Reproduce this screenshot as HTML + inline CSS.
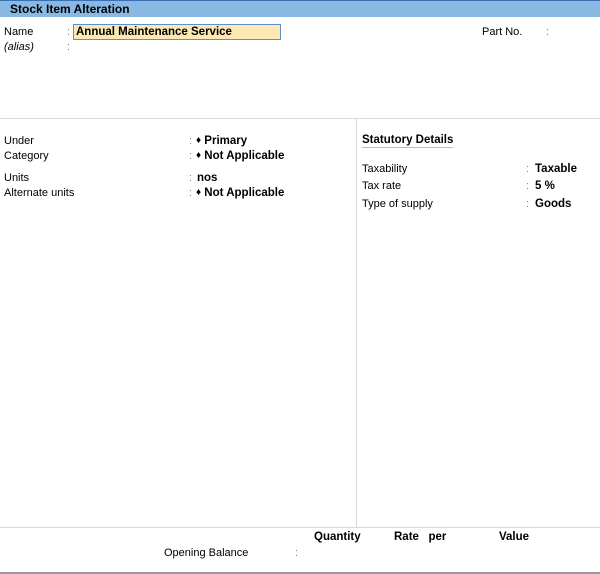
<!DOCTYPE html>
<html><head><style>
body{margin:0;width:600px;height:574px;position:relative;background:#fff;font-family:"Liberation Sans",Arial,sans-serif;font-size:11px;color:#000;overflow:hidden}
.a{position:absolute;white-space:nowrap}
.b{font-weight:bold;font-size:11.5px}
.c{color:#888}
.d{font-size:10px;position:relative;top:-1px}
</style></head><body>
<div class="a" style="left:0;top:0;width:600px;height:17px;background:#89b9e3;border-top:1px solid #3b6fb5;box-sizing:border-box"></div>
<div class="a b" style="left:10px;top:2px;font-size:12px">Stock Item Alteration</div>
<div class="a" style="left:4px;top:26px">Name</div>
<div class="a c" style="left:67px;top:26px">:</div>
<div class="a" style="left:73px;top:24px;width:206px;height:14px;background:#fde8b4;border:1px solid #5a8fd0"></div>
<div class="a b" style="left:76px;top:26px">Annual Maintenance Service</div>
<div class="a" style="left:4px;top:41px;font-style:italic">(alias)</div>
<div class="a c" style="left:67px;top:41px">:</div>
<div class="a" style="left:482px;top:26px">Part No.</div>
<div class="a c" style="left:546px;top:26px">:</div>
<div class="a" style="left:0;top:118px;width:600px;height:1px;background:#d8d8d8"></div>
<div class="a" style="left:356px;top:118px;width:1px;height:410px;background:#d8d8d8"></div>
<div class="a" style="left:0;top:527px;width:600px;height:1px;background:#d8d8d8"></div>
<div class="a" style="left:0;top:572px;width:600px;height:2px;background:#999"></div>
<div class="a" style="left:4px;top:135px">Under</div>
<div class="a" style="left:4px;top:150px">Category</div>
<div class="a" style="left:4px;top:172px">Units</div>
<div class="a" style="left:4px;top:187px">Alternate units</div>
<div class="a c" style="left:189px;top:135px">:</div>
<div class="a c" style="left:189px;top:150px">:</div>
<div class="a c" style="left:189px;top:172px">:</div>
<div class="a c" style="left:189px;top:187px">:</div>
<div class="a b" style="left:196px;top:135px"><span class="d">&#9830;</span> Primary</div>
<div class="a b" style="left:196px;top:150px"><span class="d">&#9830;</span> Not Applicable</div>
<div class="a b" style="left:197px;top:172px">nos</div>
<div class="a b" style="left:196px;top:187px"><span class="d">&#9830;</span> Not Applicable</div>
<div class="a b" style="left:362px;top:134px;border-bottom:1px solid #bbb;padding-bottom:1px">Statutory Details</div>
<div class="a" style="left:362px;top:163px">Taxability</div>
<div class="a" style="left:362px;top:180px">Tax rate</div>
<div class="a" style="left:362px;top:198px">Type of supply</div>
<div class="a c" style="left:526px;top:163px">:</div>
<div class="a c" style="left:526px;top:180px">:</div>
<div class="a c" style="left:526px;top:198px">:</div>
<div class="a b" style="left:535px;top:163px">Taxable</div>
<div class="a b" style="left:535px;top:180px">5 %</div>
<div class="a b" style="left:535px;top:198px">Goods</div>
<div class="a b" style="left:314px;top:531px">Quantity</div>
<div class="a b" style="left:394px;top:531px">Rate&nbsp;&nbsp; per</div>
<div class="a b" style="left:499px;top:531px">Value</div>
<div class="a" style="left:164px;top:547px">Opening Balance</div>
<div class="a c" style="left:295px;top:547px">:</div>
</body></html>
